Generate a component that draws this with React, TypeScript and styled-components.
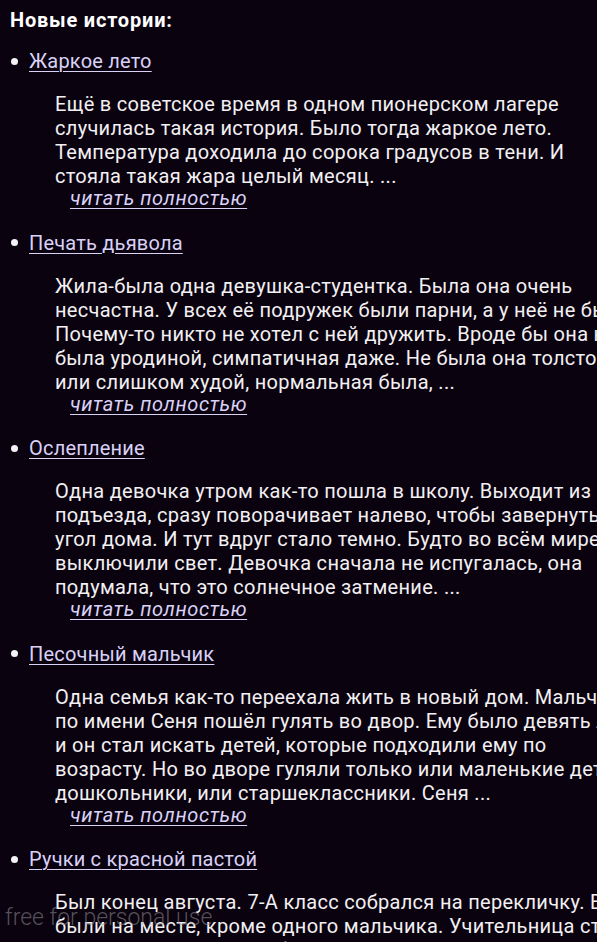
import React from "react";
import styled, { createGlobalStyle } from "styled-components";

type Story = {
  title: string;
  lines: string[];
};

const stories: Story[] = [
  {
    title: "Жаркое лето",
    lines: [
      "Ещё в советское время в одном пионерском лагере",
      "случилась такая история. Было тогда жаркое лето.",
      "Температура доходила до сорока градусов в тени. И",
      "стояла такая жара целый месяц. ...",
    ],
  },
  {
    title: "Печать дьявола",
    lines: [
      "Жила-была одна девушка-студентка. Была она очень",
      "несчастна. У всех её подружек были парни, а у неё не было.",
      "Почему-то никто не хотел с ней дружить. Вроде бы она не",
      "была уродиной, симпатичная даже. Не была она толстой",
      "или слишком худой, нормальная была, ...",
    ],
  },
  {
    title: "Ослепление",
    lines: [
      "Одна девочка утром как-то пошла в школу. Выходит из",
      "подъезда, сразу поворачивает налево, чтобы завернуть за",
      "угол дома. И тут вдруг стало темно. Будто во всём мире",
      "выключили свет. Девочка сначала не испугалась, она",
      "подумала, что это солнечное затмение. ...",
    ],
  },
  {
    title: "Песочный мальчик",
    lines: [
      "Одна семья как-то переехала жить в новый дом. Мальчик",
      "по имени Сеня пошёл гулять во двор. Ему было девять лет,",
      "и он стал искать детей, которые подходили ему по",
      "возрасту. Но во дворе гуляли только или маленькие дети-",
      "дошкольники, или старшеклассники. Сеня ...",
    ],
  },
  {
    title: "Ручки с красной пастой",
    lines: [
      "Был конец августа. 7-А класс собрался на перекличку. Все",
      "были на месте, кроме одного мальчика. Учительница стала",
      "перекличку. Сергея не было, ...",
    ],
  },
];

const GlobalStyle = createGlobalStyle`
  html, body {
    margin: 0;
    padding: 0;
    background: #0b0210;
    overflow: hidden;
  }
  body {
    font-family: Roboto, "Noto Sans", sans-serif;
    color: #f2f0f2;
  }
`;

const Page = styled.div`
  position: relative;
  width: 597px;
  height: 942px;
  overflow: hidden;
  padding: 8px 0 0 10px;
  box-sizing: border-box;
`;

const Heading = styled.h2`
  margin: 0;
  font-size: 20px;
  line-height: 24px;
  font-weight: 700;
  letter-spacing: 0.8px;
  color: #ffffff;
`;

const List = styled.ul`
  list-style: none;
  margin: 17px 0 0;
  padding: 0;
`;

const Item = styled.li`
  margin-bottom: 21.5px;
`;

const TitleRow = styled.div`
  display: flex;
  align-items: center;
  gap: 11px;
  line-height: 24px;
`;

const Dot = styled.span`
  width: 7px;
  height: 7px;
  margin-left: 1px;
  border-radius: 50%;
  background: #f4f2f6;
`;

const TitleLink = styled.a`
  font-size: 20px;
  letter-spacing: 0.2px;
  color: #d9d2f7;
  text-decoration: underline;
  text-underline-offset: 3px;
  text-decoration-thickness: 1px;
`;

const Body = styled.p`
  margin: 19px 0 0 45px;
  font-size: 20px;
  line-height: 24px;
  letter-spacing: 0.3px;
  white-space: nowrap;
`;

const ReadMore = styled.a`
  display: block;
  margin-left: 60px;
  font-size: 20px;
  line-height: 21px;
  font-style: italic;
  letter-spacing: 0.6px;
  color: #d9d2f7;
  text-decoration: underline;
  text-underline-offset: 3px;
  text-decoration-thickness: 1px;
`;

const Watermark = styled.div`
  position: absolute;
  left: 5px;
  top: 904px;
  font-size: 23px;
  font-weight: 300;
  line-height: 28px;
  color: rgba(150, 150, 150, 0.55);
  pointer-events: none;
`;

export default function App() {
  return (
    <>
      <GlobalStyle />
      <Page>
        <Heading>Новые истории:</Heading>
        <List>
          {stories.map((s) => (
            <Item key={s.title}>
              <TitleRow>
                <Dot />
                <TitleLink href="#">{s.title}</TitleLink>
              </TitleRow>
              <Body>
                {s.lines.map((l, i) => (
                  <React.Fragment key={i}>
                    {l}
                    {i < s.lines.length - 1 && <br />}
                  </React.Fragment>
                ))}
              </Body>
              <ReadMore href="#">читать полностью</ReadMore>
            </Item>
          ))}
        </List>
        <Watermark>free for personal use</Watermark>
      </Page>
    </>
  );
}
